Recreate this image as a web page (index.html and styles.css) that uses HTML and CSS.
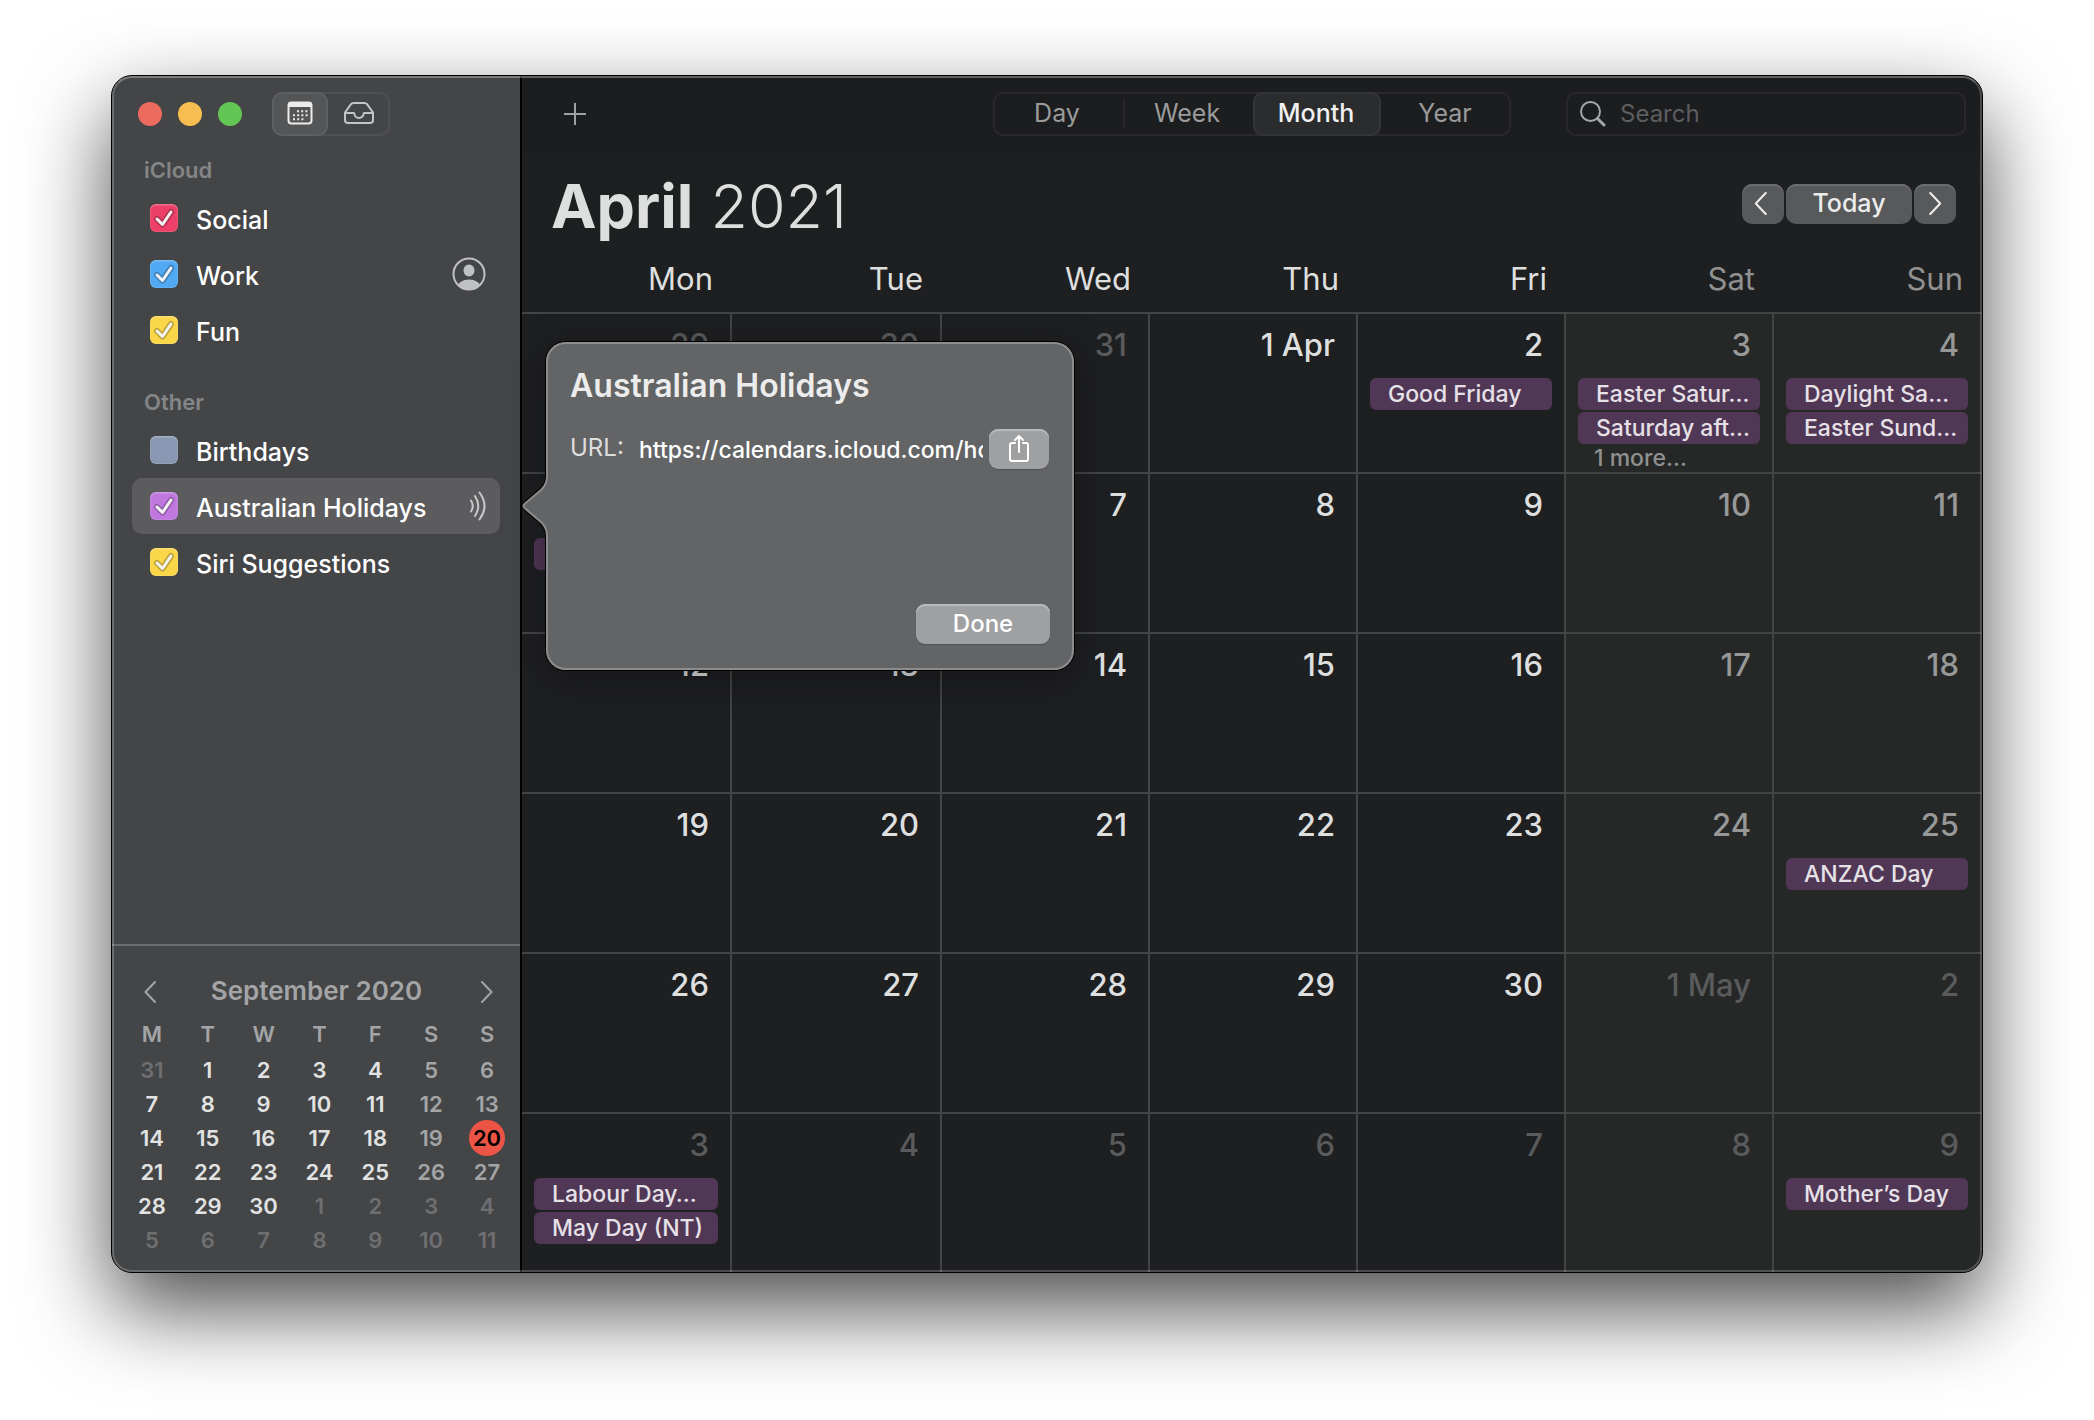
FILE: index.html
```html
<!DOCTYPE html>
<html lang="en-AU">
<head>
<meta charset="utf-8">
<title>Calendar</title>
<meta name="viewport" content="width=device-width, initial-scale=1">
<link rel="stylesheet" href="styles.css">
</head>
<body>
<svg class="sprite" aria-hidden="true">
  <symbol id="check" viewBox="0 0 28 28">
    <path class="tick-edge" d="M7 15l5.5 5.5L21 8"/>
    <path class="tick" d="M7 15l5.5 5.5L21 8"/>
  </symbol>
  <symbol id="left" viewBox="0 0 12 22"><path d="M11 1L1.500 11L11 21"/></symbol>
  <symbol id="right" viewBox="0 0 12 22"><path d="M1 1l9.500 10L1 21"/></symbol>
</svg>
<div class="window">
  <aside class="sidebar">
    <header class="titlebar">
      <div class="lights">
        <button class="light close" aria-label="Close"></button>
        <button class="light minimise" aria-label="Minimise"></button>
        <button class="light zoom" aria-label="Zoom"></button>
      </div>
      <div class="view-toggle">
        <button class="toggle selected" aria-label="Calendars">
          <svg width="26" height="24" viewBox="0 0 26 24">
            <rect x="1.500" y="1.500" width="23" height="21" rx="3" fill="none" stroke="#ececec" stroke-width="2"/>
            <path d="M1 6V3.500A2.500 2.500 0 0 1 3.500 1h19A2.500 2.500 0 0 1 25 3.500V6z" fill="#ececec"/>
            <path d="M10 10.200h12M6 14.200h16M6 18.200h12" stroke="#ececec" stroke-width="2" stroke-dasharray="2 2.200"/>
          </svg>
        </button>
        <button class="toggle" aria-label="Inbox">
          <svg width="32" height="24" viewBox="0 0 32 24" fill="none" stroke="#c3c4c6" stroke-width="2" stroke-linejoin="round">
            <path d="M2 11.500L8 3.200Q9 2 10.500 2h11Q23 2 24 3.200L30 11.500V19a3 3 0 0 1-3 3H5a3 3 0 0 1-3-3z"/>
            <path d="M2 12h8.500q1 0 1 1a4.500 4 0 0 0 9 0q0-1 1-1H30"/>
          </svg>
        </button>
      </div>
    </header>

    <nav class="calendars">
      <h2 class="group-name">iCloud</h2>
      <ul class="list">
        <li class="item">
          <label class="choice"><span class="box red"><input type="checkbox" checked><svg><use href="#check"/></svg></span>Social</label>
        </li>
        <li class="item">
          <label class="choice"><span class="box blue"><input type="checkbox" checked><svg><use href="#check"/></svg></span>Work</label>
          <svg class="shared" width="34" height="34" viewBox="0 0 34 34">
            <clipPath id="disc"><circle cx="17" cy="17" r="15.500"/></clipPath>
            <circle cx="17" cy="17" r="15.500" fill="none" stroke="#c0c1c3" stroke-width="2"/>
            <ellipse cx="17" cy="13.500" rx="5.500" ry="6" fill="#c0c1c3"/>
            <ellipse cx="17" cy="30" rx="11.500" ry="7.500" fill="#c0c1c3" clip-path="url(#disc)"/>
          </svg>
        </li>
        <li class="item">
          <label class="choice"><span class="box yellow"><input type="checkbox" checked><svg><use href="#check"/></svg></span>Fun</label>
        </li>
      </ul>
      <h2 class="group-name second">Other</h2>
      <ul class="list">
        <li class="item">
          <label class="choice"><span class="box slate"><input type="checkbox"></span>Birthdays</label>
        </li>
        <li class="item current">
          <label class="choice"><span class="box purple"><input type="checkbox" checked><svg><use href="#check"/></svg></span>Australian Holidays</label>
          <svg class="waves" width="18" height="30" viewBox="0 0 18 30" fill="none" stroke="#c8c8ca" stroke-width="2" stroke-linecap="round">
            <path d="M2 9.500q3.500 5.500 0 11M6 5q6.500 10 0 20M10.500 1.500q10 13.500 0 27"/>
          </svg>
          <section class="popover" aria-label="Calendar details">
            <svg class="arrow" width="28" height="60" viewBox="0 0 28 60">
              <path class="arrow-edge" d="M25 0C25 6 23 10 19.500 13.500L2.500 28Q.500 30 2.500 32L19.500 46.500C23 50 25 54 25 60"/>
              <path class="arrow-fill" d="M28 0H25C25 6 23 10 19.500 13.500L2.500 28Q.500 30 2.500 32L19.500 46.500C23 50 25 54 25 60H28z"/>
              <path class="arrow-line" d="M25 0C25 6 23 10 19.500 13.500L2.500 28Q.500 30 2.500 32L19.500 46.500C23 50 25 54 25 60"/>
            </svg>
            <h3 class="popover-title">Australian Holidays</h3>
            <div class="url-row">
              <label class="url-label" for="url">URL:</label>
              <input class="url" id="url" type="text" readonly value="https://calendars.icloud.com/holidays/au_en.ics">
              <button class="share" aria-label="Share">
                <svg width="24" height="32" viewBox="0 0 24 32" fill="none" stroke="#fff" stroke-width="2" stroke-linecap="round" stroke-linejoin="round">
                  <path d="M8 10H5a2 2 0 0 0-2 2v14a2 2 0 0 0 2 2h14a2 2 0 0 0 2-2V12a2 2 0 0 0-2-2h-3M12 19V3.500M8 7L12 3l4 4"/>
                </svg>
              </button>
            </div>
            <button class="done">Done</button>
          </section>
        </li>
        <li class="item">
          <label class="choice"><span class="box yellow"><input type="checkbox" checked><svg><use href="#check"/></svg></span>Siri Suggestions</label>
        </li>
      </ul>
    </nav>

    <section class="mini">
      <div class="mini-head">
        <button class="mini-nav" aria-label="Previous month"><svg class="chevron" width="12" height="22"><use href="#left"/></svg></button>
        <h2 class="mini-title">September 2020</h2>
        <button class="mini-nav" aria-label="Next month"><svg class="chevron" width="12" height="22"><use href="#right"/></svg></button>
      </div>
      <table class="mini-grid">
        <thead>
          <tr><th>M</th><th>T</th><th>W</th><th>T</th><th>F</th><th>S</th><th>S</th></tr>
        </thead>
        <tbody>
          <tr><td class="out">31</td><td>1</td><td>2</td><td>3</td><td>4</td><td>5</td><td>6</td></tr>
          <tr><td>7</td><td>8</td><td>9</td><td>10</td><td>11</td><td>12</td><td>13</td></tr>
          <tr><td>14</td><td>15</td><td>16</td><td>17</td><td>18</td><td>19</td><td><span class="today">20</span></td></tr>
          <tr><td>21</td><td>22</td><td>23</td><td>24</td><td>25</td><td>26</td><td>27</td></tr>
          <tr><td>28</td><td>29</td><td>30</td><td class="out">1</td><td class="out">2</td><td class="out">3</td><td class="out">4</td></tr>
          <tr><td class="out">5</td><td class="out">6</td><td class="out">7</td><td class="out">8</td><td class="out">9</td><td class="out">10</td><td class="out">11</td></tr>
        </tbody>
      </table>
    </section>
  </aside>

  <main class="main">
    <header class="toolbar">
      <button class="add" aria-label="New event">
        <svg width="22" height="22" viewBox="0 0 22 22" stroke="#a0a1a2" stroke-width="2"><path d="M11 0v22M0 11h22"/></svg>
      </button>
      <div class="segments">
        <button class="segment">Day</button>
        <button class="segment ruled">Week</button>
        <button class="segment active">Month</button>
        <button class="segment">Year</button>
      </div>
      <label class="search">
        <svg width="26" height="26" viewBox="0 0 26 26" fill="none" stroke="#a5a6a7" stroke-linecap="round"><circle cx="10.500" cy="10.500" r="9.500" stroke-width="2"/><path d="M17.500 17.500L24 24" stroke-width="3"/></svg>
        <input class="search-field" type="search" placeholder="Search" aria-label="Search">
      </label>
    </header>
    <div class="heading">
      <h1 class="month"><strong>April</strong> 2021</h1>
      <div class="pager">
        <button class="page back" aria-label="Previous"><svg class="chevron" width="13" height="23"><use href="#left"/></svg></button>
        <button class="page wide">Today</button>
        <button class="page" aria-label="Next"><svg class="chevron" width="13" height="23"><use href="#right"/></svg></button>
      </div>
    </div>
    <table class="grid">
      <thead>
        <tr><th>Mon</th><th>Tue</th><th>Wed</th><th>Thu</th><th>Fri</th><th>Sat</th><th>Sun</th></tr>
      </thead>
      <tbody>
        <tr>
          <td class="out"><div class="day">29</div></td>
          <td class="out"><div class="day">30</div></td>
          <td class="out"><div class="day">31</div></td>
          <td><div class="day">1 Apr</div></td>
          <td><div class="day">2</div><div class="event">Good Friday</div></td>
          <td><div class="day">3</div><div class="event">Easter Satur…</div><div class="event">Saturday aft…</div><div class="more">1 more…</div></td>
          <td><div class="day">4</div><div class="event">Daylight Sa…</div><div class="event">Easter Sund…</div></td>
        </tr>
        <tr>
          <td><div class="day">5</div><div class="event">Easter Mon…</div></td>
          <td><div class="day">6</div></td>
          <td><div class="day">7</div></td>
          <td><div class="day">8</div></td>
          <td><div class="day">9</div></td>
          <td><div class="day">10</div></td>
          <td><div class="day">11</div></td>
        </tr>
        <tr>
          <td><div class="day">12</div></td>
          <td><div class="day">13</div></td>
          <td><div class="day">14</div></td>
          <td><div class="day">15</div></td>
          <td><div class="day">16</div></td>
          <td><div class="day">17</div></td>
          <td><div class="day">18</div></td>
        </tr>
        <tr>
          <td><div class="day">19</div></td>
          <td><div class="day">20</div></td>
          <td><div class="day">21</div></td>
          <td><div class="day">22</div></td>
          <td><div class="day">23</div></td>
          <td><div class="day">24</div></td>
          <td><div class="day">25</div><div class="event">ANZAC Day</div></td>
        </tr>
        <tr>
          <td><div class="day">26</div></td>
          <td><div class="day">27</div></td>
          <td><div class="day">28</div></td>
          <td><div class="day">29</div></td>
          <td><div class="day">30</div></td>
          <td class="out"><div class="day">1 May</div></td>
          <td class="out"><div class="day">2</div></td>
        </tr>
        <tr>
          <td class="out"><div class="day">3</div><div class="event">Labour Day…</div><div class="event">May Day (NT)</div></td>
          <td class="out"><div class="day">4</div></td>
          <td class="out"><div class="day">5</div></td>
          <td class="out"><div class="day">6</div></td>
          <td class="out"><div class="day">7</div></td>
          <td class="out"><div class="day">8</div></td>
          <td class="out"><div class="day">9</div><div class="event">Mother’s Day</div></td>
        </tr>
      </tbody>
    </table>
  </main>
</div>
</body>
</html>
```

FILE: styles.css
```css
* { box-sizing: border-box; }

body {
  margin: 0;
  padding: 75px 111px 147px;
  background: #fff;
  font-family: Inter, "Liberation Sans", sans-serif;
  font-size: 24px;
  color: #dedfdf;
}

h1, h2, h3, ul { margin: 0; padding: 0; font-weight: inherit; }
ul { list-style: none; }
svg { display: block; flex: none; }

button, input {
  margin: 0;
  padding: 0;
  border: 0;
  background: none;
  color: inherit;
  font: inherit;
  outline: 0;
}

.sprite { position: absolute; width: 0; height: 0; }

.window {
  position: relative;
  display: grid;
  grid-template-columns: 410px 1fr;
  border: 1px solid #000;
  border-radius: 21px;
  background: #1e1f21;
  box-shadow: 0 36px 86px rgba(0, 0, 0, .7);
}

/* light rim just inside the window edge */
.window::after {
  content: "";
  position: absolute;
  inset: 0;
  z-index: 1;
  border: 2px solid rgba(255, 255, 255, .2);
  border-top-color: rgba(255, 255, 255, .3);
  border-radius: 20px;
  pointer-events: none;
}

/* sidebar */
.sidebar {
  display: flex;
  flex-direction: column;
  background: #444547;
  border-right: 2px solid #000;
  border-radius: 20px 0 0 20px;
}

.titlebar {
  display: flex;
  align-items: center;
  gap: 30px;
  height: 76px;
  padding-left: 26px;
}

.lights { display: flex; gap: 16px; }
.light { width: 24px; height: 24px; border-radius: 50%; }
.close { background: #ed6a5f; }
.minimise { background: #f6be50; }
.zoom { background: #62c655; }

.view-toggle {
  display: flex;
  height: 44px;
  border-radius: 10px;
  box-shadow: inset 0 0 0 2px #4f5052;
}

.toggle {
  display: grid;
  place-items: center;
  width: 62px;
  padding-bottom: 2px;
}

.toggle.selected {
  width: 56px;
  border-radius: 10px;
  background: #545557;
  box-shadow: inset 0 0 0 2px #5e5f61;
}

.calendars { padding: 0 20px; }

.group-name {
  height: 38px;
  padding-left: 12px;
  font-size: 22px;
  line-height: 36px;
  font-weight: 600;
  color: #848587;
}

.group-name.second { height: 64px; padding-top: 26px; }

.item {
  position: relative;
  display: flex;
  align-items: center;
  justify-content: space-between;
  height: 56px;
  padding: 0 13px 0 18px;
  border-radius: 10px;
}

.item.current { background: #5c5c5e; }

.choice {
  display: flex;
  align-items: center;
  gap: 18px;
  padding-top: 4px;
  font-size: 25px;
  line-height: 32px;
  font-weight: 500;
  color: #fff;
  white-space: nowrap;
}

.box {
  display: grid;
  width: 28px;
  height: 28px;
  margin-top: -4px;
  border-radius: 6px;
  box-shadow: inset 0 0 0 1px rgba(255, 255, 255, .1), inset 0 2px 0 rgba(255, 255, 255, .15);
}

.box input { grid-area: 1 / 1; width: 28px; height: 28px; appearance: none; }
.box svg { grid-area: 1 / 1; width: 28px; height: 28px; pointer-events: none; }

.red { background: #ed4069; }
.blue { background: #50a9f2; }
.yellow { background: #fad649; }
.slate { background: #8897b2; }
.purple { background: #c078df; }

.tick, .tick-edge { fill: none; stroke-linecap: round; stroke-linejoin: round; }
.tick { stroke: #f3f3f3; stroke-width: 3; }
.tick-edge { stroke: rgba(0, 0, 0, .25); stroke-width: 6; }
.shared { margin-right: 1px; }

.chevron { fill: none; stroke: currentColor; stroke-width: 2; stroke-linecap: round; stroke-linejoin: round; }

/* popover */
.popover {
  position: absolute;
  z-index: 5;
  top: -136px;
  left: calc(100% + 46px);
  display: flex;
  flex-direction: column;
  width: 528px;
  height: 328px;
  padding: 24px;
  border-radius: 20px;
  background: #636466;
  box-shadow: inset 0 0 0 2px #8b8c8d, 0 0 0 1px #000, 0 8px 40px rgba(0, 0, 0, .35);
}

.arrow { position: absolute; left: -24px; top: 134px; }
.arrow-fill { fill: #636466; }
.arrow-edge { fill: none; stroke: #000; stroke-width: 4; }
.arrow-line { fill: none; stroke: #8b8c8d; stroke-width: 2; }

.popover-title {
  font-size: 32px;
  line-height: 40px;
  font-weight: 600;
  color: #ececec;
  white-space: nowrap;
}

.url-row { display: flex; align-items: center; margin-top: 23px; }
.url-label { width: 69px; padding-bottom: 2px; font-size: 24px; line-height: 36px; color: #dededf; }
.url { flex: 1; min-width: 0; height: 40px; padding-top: 2px; font-size: 23px; font-weight: 500; color: #fff; margin-right: 6px; }

.share, .done {
  display: grid;
  place-items: center;
  height: 40px;
  border-radius: 9px;
  background: #9fa0a2;
  box-shadow: inset 0 2px 0 #b9babb, 0 1px 1px rgba(0, 0, 0, .2);
  color: #fff;
}

.share { width: 60px; margin-right: 1px; }
.done { width: 134px; margin: auto 0 2px auto; padding-bottom: 2px; font-size: 24px; font-weight: 500; }

/* mini month */
.mini {
  margin-top: auto;
  padding: 30px 5px 15px 12px;
  border-top: 2px solid #6b6c6e;
  color: #a3a4a5;
}

.mini-head { display: flex; justify-content: space-between; align-items: center; height: 30px; padding: 0 22px 0 20px; }
.mini-nav { height: 22px; margin-top: 2px; }
.mini-title { padding-right: 4px; font-size: 26px; line-height: 30px; font-weight: 600; }

.mini-grid {
  width: 100%;
  margin-top: 9px;
  border-spacing: 0;
  table-layout: fixed;
  font-size: 22px;
  line-height: 34px;
  text-align: center;
}

.mini-grid th, .mini-grid td { height: 34px; padding: 0; font-weight: 600; }
.mini-grid th { height: 38px; }
.mini-grid td:nth-child(-n+5) { color: #e1e2e2; }
.mini-grid td.out { color: #6e6f71; }

.today {
  display: block;
  width: 36px;
  height: 36px;
  margin: -1px auto;
  border-radius: 50%;
  background: #ec5545;
  color: #000;
  line-height: 36px;
}

/* main area */
.main { min-width: 0; border-radius: 0 20px 20px 0; overflow: hidden; }

.toolbar {
  display: flex;
  align-items: center;
  height: 76px;
  padding: 0 16px 0 42px;
  background: #1c1d1f;
}

.add { margin-right: auto; }

.segments {
  display: flex;
  height: 44px;
  border-radius: 10px;
  box-shadow: inset 0 0 0 2px #29292b;
}

.segment { width: 130px; padding: 0 2px 2px 0; font-size: 25px; color: #9a9b9b; }
.segment.active { width: 128px; border-radius: 10px; background: #2b2c2e; box-shadow: inset 0 0 0 2px #343537; color: #f0f0f0; font-weight: 500; }
.segment.ruled { background: linear-gradient(#29292b, #29292b) left center / 2px 28px no-repeat; }

.search {
  display: flex;
  align-items: center;
  gap: 14px;
  width: 400px;
  height: 44px;
  margin-left: 55px;
  padding: 0 12px;
  border: 2px solid #29292b;
  border-radius: 10px;
}

.search-field { flex: 1; min-width: 0; padding-bottom: 2px; appearance: none; font-size: 24px; }
.search-field::placeholder { color: #5d5e60; opacity: 1; }

.heading {
  display: flex;
  justify-content: space-between;
  align-items: flex-start;
  height: 100px;
  padding: 15px 26px 0 29px;
}

.month { font-size: 61px; line-height: 78px; font-weight: 300; color: #dddede; white-space: nowrap; }
.month strong { font-weight: 700; }

.pager { display: flex; gap: 2px; margin-top: 17px; }

.page {
  display: grid;
  place-items: center;
  width: 42px;
  height: 40px;
  padding-bottom: 2px;
  border-radius: 10px;
  background: #58595b;
  box-shadow: inset 0 2px 0 #6b6c6e;
  color: #ececec;
}

.page.back { padding-right: 6px; }
.page.wide { width: 126px; font-size: 25px; font-weight: 500; }

.grid { width: 100%; border-spacing: 0; table-layout: fixed; }

.grid th {
  height: 60px;
  padding: 0 19px 6px 0;
  text-align: right;
  vertical-align: middle;
  font-size: 31px;
  line-height: 40px;
  font-weight: 400;
}

.grid th:nth-child(-n+2) { width: 210px; }
.grid th:nth-child(n+6) { color: #909190; }

.grid td {
  height: 160px;
  padding: 0 12px;
  border-top: 2px solid #434445;
  border-right: 2px solid #434445;
  vertical-align: top;
}

.grid td:last-child { border-right: 0; padding-right: 14px; }
.grid td:nth-child(n+6) { background: #262827; color: #979897; }
.grid td.out { color: #5a5b5c; }

.day { height: 64px; padding: 11px 9px 0 0; text-align: right; font-size: 31px; line-height: 40px; font-weight: 500; }

.event {
  height: 32px;
  margin-bottom: 2px;
  padding-left: 18px;
  border-radius: 6px;
  background: #503756;
  color: #e6e1e7;
  font-size: 23px;
  line-height: 32px;
  font-weight: 500;
  white-space: nowrap;
  overflow: hidden;
}

.more { height: 26px; padding-left: 16px; font-size: 23px; line-height: 24px; font-weight: 500; color: #8f908f; }
```
